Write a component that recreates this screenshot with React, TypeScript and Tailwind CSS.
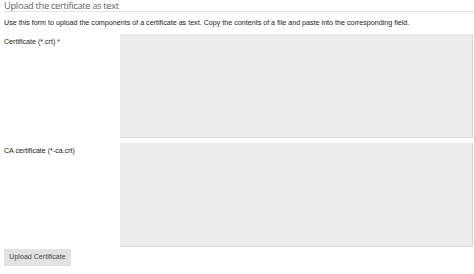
export default function App() {
  return (
    <main className="min-h-screen w-[474px] bg-white pl-[4px] font-['Liberation_Sans',Arial,sans-serif] text-[#333]">
      <h1 className="border-b border-[#e3e3e3] font-['Open_Sans',sans-serif] text-[9.4px] leading-[11px] tracking-[-0.35px] text-[#666]">
        Upload the certificate as text
      </h1>
      <p className="mt-[6px] text-[7.15px] leading-[10px] text-[#222]">
        Use this form to upload the components of a certificate as text. Copy the contents of a file and paste into the corresponding field.
      </p>

      <div className="mt-[6px] flex flex-col gap-[5px]">
        <Field label="Certificate (*.crt)" required />
        <Field label="CA certificate (*-ca.crt)" />
      </div>

      <button className="mt-[2px] block h-[17px] w-[67px] bg-[#e2e2e2] text-[7.1px] text-[#444]">
        Upload Certificate
      </button>
    </main>
  );
}

function Field({ label, required }: { label: string; required?: boolean }) {
  return (
    <div className="flex">
      <label className="w-[116px] pt-[3px] text-[7.1px] leading-[10px] text-[#222]">
        {label}
        {required && <span className="text-[#c00]"> *</span>}
      </label>
      <textarea className="block h-[104px] w-[353px] resize-none border-r border-b border-[#d9d9d9] bg-[#ececec] outline-none" />
    </div>
  );
}
